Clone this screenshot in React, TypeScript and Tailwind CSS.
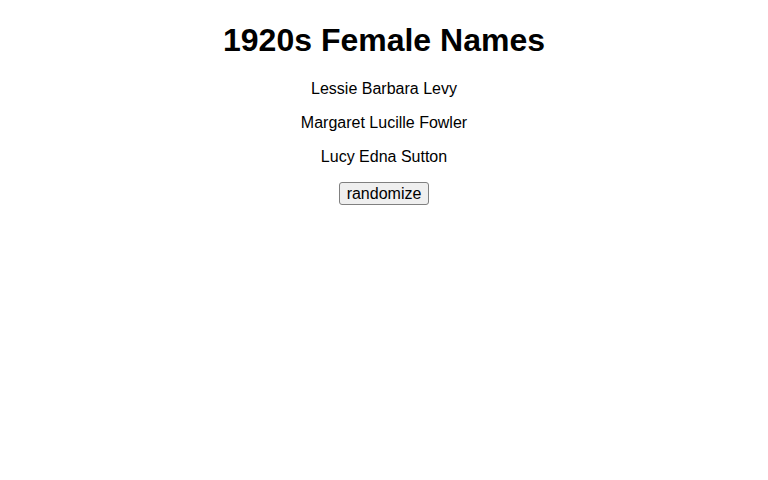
import React, { useState } from "react";

const FIRST = ["Lessie", "Margaret", "Lucy", "Dorothy", "Helen", "Mildred", "Ruth", "Evelyn", "Virginia", "Frances"];
const MIDDLE = ["Barbara", "Lucille", "Edna", "Mae", "Louise", "Irene", "Pauline", "Hazel", "Marie", "Gladys"];
const LAST = ["Levy", "Fowler", "Sutton", "Harper", "Bishop", "Calloway", "Whitman", "Dawson", "Pierce", "Monroe"];

const pick = (arr: string[]) => arr[Math.floor(Math.random() * arr.length)];

export default function App() {
  const [names, setNames] = useState<string[]>([
    "Lessie Barbara Levy",
    "Margaret Lucille Fowler",
    "Lucy Edna Sutton",
  ]);

  const randomize = () => {
    setNames([0, 1, 2].map(() => `${pick(FIRST)} ${pick(MIDDLE)} ${pick(LAST)}`));
  };

  return (
    <div className="px-2 pt-[22px] text-center text-black bg-white font-['Liberation_Sans',Arial,sans-serif]">
      <h1 className="text-[32px] leading-[37px] font-bold m-0 mb-[21px]">1920s Female Names</h1>
      {names.map((n, i) => (
        <p key={i} className="text-base leading-[18px] my-4">
          {n}
        </p>
      ))}
      <button
        onClick={randomize}
        className="text-base leading-[19px] px-[7px] py-[1px] bg-[#efefef] border border-[#808080] rounded-[3px] text-black font-['Liberation_Sans',Arial,sans-serif]"
      >
        randomize
      </button>
    </div>
  );
}
